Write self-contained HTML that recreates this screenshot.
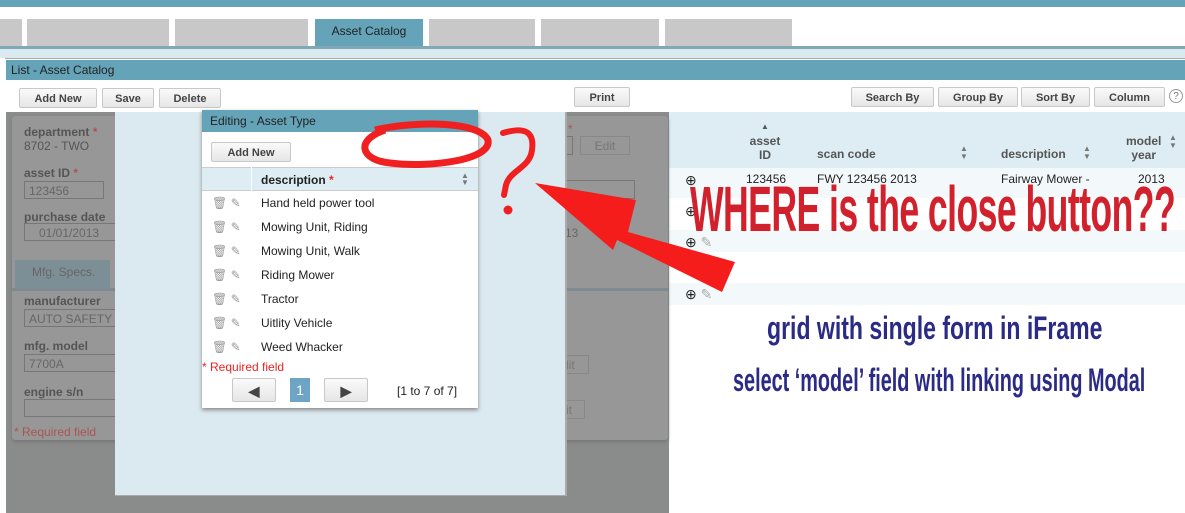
<!DOCTYPE html>
<html><head><style>
body{margin:0;width:1185px;height:513px;overflow:hidden;background:#fff;font-family:"Liberation Sans",sans-serif;position:relative}
.a{position:absolute}
.btn{position:absolute;height:20px;border:1px solid #c8c8c8;border-radius:2px;background:linear-gradient(#fafafa,#e6e6e6);font-size:11px;font-weight:bold;color:#444;text-align:center;line-height:20px;box-sizing:border-box}
.tab{position:absolute;top:19px;height:27px;background:#c8c8c8}
.lbl{position:absolute;font-size:12px;font-weight:bold;color:#555}
.inp{position:absolute;border:1px solid #777;height:18px;font-size:12px;color:#666;line-height:18px;padding-left:4px;box-sizing:border-box}
.row{position:absolute;left:0;width:276px;height:24px;font-size:12px;color:#222}
.row span{position:absolute;left:59px;top:5px}
.big{font-weight:bold;white-space:nowrap;transform-origin:0 0}
</style></head><body>
<div class="a" style="left:0;top:0;width:1185px;height:7px;background:#64a3b8"></div>
<div class="tab" style="left:0;width:22px"></div>
<div class="tab" style="left:27px;width:142px"></div>
<div class="tab" style="left:175px;width:133px"></div>
<div class="tab" style="left:315px;width:108px;background:#64a3b8;font-size:12px;text-align:center;line-height:25px;color:#222">Asset Catalog</div>
<div class="tab" style="left:429px;width:106px"></div>
<div class="tab" style="left:541px;width:118px"></div>
<div class="tab" style="left:665px;width:127px"></div>
<div class="a" style="left:0;top:46px;width:1185px;height:3px;background:#7fa9b8"></div>
<div class="a" style="left:0;top:49px;width:1185px;height:9px;background:#dbe9f0"></div>
<div class="a" style="left:5px;top:58px;width:1180px;height:1px;background:#aaa"></div>
<div class="a" style="left:6px;top:60px;width:1179px;height:20px;background:#64a3b8;font-size:12px;line-height:20px;color:#222;padding-left:5px">List - Asset Catalog</div>
<div class="btn" style="left:19px;top:88px;width:78px">Add New</div>
<div class="btn" style="left:102px;top:88px;width:52px">Save</div>
<div class="btn" style="left:159px;top:88px;width:62px">Delete</div>
<div class="btn" style="left:574px;top:87px;width:56px">Print</div>
<div class="btn" style="left:851px;top:87px;width:83px">Search By</div>
<div class="btn" style="left:938px;top:87px;width:80px">Group By</div>
<div class="btn" style="left:1021px;top:87px;width:69px">Sort By</div>
<div class="btn" style="left:1094px;top:87px;width:71px">Column</div>
<div class="a" style="left:1169px;top:89px;width:14px;height:14px;border:1px solid #999;border-radius:50%;font-size:10px;text-align:center;line-height:14px;color:#777;box-sizing:border-box">?</div>
<!-- right grid -->
<div class="a" style="left:669px;top:112px;width:516px;height:56px;background:#ddedf3"></div>
<div class="a" style="left:669px;top:168px;width:516px;height:30px;background:#f3f9fb"></div>
<div class="a" style="left:669px;top:230px;width:516px;height:22px;background:#f3f9fb"></div>
<div class="a" style="left:669px;top:283px;width:516px;height:22px;background:#f3f9fb"></div>
<div class="a" style="left:745px;top:118px;font-size:12px;font-weight:bold;color:#555;text-align:center;width:40px;line-height:14px"><span style="font-size:8px">▲<br></span>asset<br>ID</div>
<div class="a" style="left:817px;top:147px;font-size:12px;font-weight:bold;color:#555">scan code</div>
<div class="a" style="left:1001px;top:147px;font-size:12px;font-weight:bold;color:#555">description</div>
<div class="a" style="left:1126px;top:134px;font-size:12px;font-weight:bold;color:#555;text-align:center;line-height:14px">model<br>year</div>
<div class="a" style="left:960px;top:145px;font-size:8px;color:#777;line-height:8px">▲<br>▼</div>
<div class="a" style="left:1083px;top:145px;font-size:8px;color:#777;line-height:8px">▲<br>▼</div>
<div class="a" style="left:1169px;top:134px;font-size:8px;color:#777;line-height:8px">▲<br>▼</div>
<div class="a" style="left:746px;top:172px;font-size:12px;color:#222">123456</div>
<div class="a" style="left:817px;top:172px;font-size:12px;color:#222">FWY 123456 2013</div>
<div class="a" style="left:1001px;top:172px;font-size:12px;color:#222">Fairway Mower -</div>
<div class="a" style="left:1138px;top:172px;font-size:12px;color:#222">2013</div>
<div class="a" style="left:685px;top:172px;font-size:14px;color:#222">⊕</div>
<div class="a" style="left:685px;top:203px;font-size:14px;color:#222">⊕</div>
<div class="a" style="left:685px;top:234px;font-size:14px;color:#222">⊕ <span style="color:#aaa">✎</span></div>
<div class="a" style="left:685px;top:286px;font-size:14px;color:#222">⊕ <span style="color:#aaa">✎</span></div>
<!-- overlay left -->
<div class="a" style="left:6px;top:112px;width:663px;height:401px;background:#8a8c8c"></div>
<div class="a" style="left:12px;top:116px;width:656px;height:324px;background:#979797;border-radius:3px;box-shadow:0 2px 3px #777"></div>
<div class="lbl" style="left:24px;top:125px">department <span style="color:#a55">*</span></div>
<div class="a" style="left:24px;top:139px;font-size:12px;color:#555">8702 - TWO</div>
<div class="lbl" style="left:24px;top:166px">asset ID <span style="color:#a55">*</span></div>
<div class="inp" style="left:24px;top:181px;width:80px">123456</div>
<div class="lbl" style="left:24px;top:210px">purchase date</div>
<div class="inp" style="left:24px;top:223px;width:92px;padding-left:14px">01/01/2013</div>
<div class="a" style="left:15px;top:260px;width:95px;height:28px;background:#7d8f96;font-size:12px;color:#666;line-height:24px;padding-left:17px;box-sizing:border-box">Mfg. Specs.</div>
<div class="a" style="left:12px;top:288px;width:656px;height:3px;background:#7d8a8f"></div>
<div class="lbl" style="left:24px;top:294px">manufacturer</div>
<div class="inp" style="left:24px;top:309px;width:92px">AUTO SAFETY</div>
<div class="lbl" style="left:24px;top:339px">mfg. model</div>
<div class="inp" style="left:24px;top:354px;width:92px">7700A</div>
<div class="lbl" style="left:24px;top:385px">engine s/n</div>
<div class="inp" style="left:24px;top:399px;width:92px"></div>
<div class="a" style="left:14px;top:425px;font-size:12px;color:#a55">* Required field</div>
<div class="a" style="left:568px;top:122px;font-size:12px;color:#a55">*</div>
<div class="a" style="left:565px;top:136px;width:8px;height:19px;border:1px solid #777;box-sizing:border-box"></div>
<div class="a" style="left:580px;top:136px;width:50px;height:19px;border:1px solid #888;font-size:12px;color:#777;text-align:center;line-height:18px;box-sizing:border-box">Edit</div>
<div class="a" style="left:565px;top:180px;width:70px;height:19px;border:1px solid #777;box-sizing:border-box"></div>
<div class="a" style="left:565px;top:226px;font-size:12px;color:#666">13</div>
<div class="a" style="left:565px;top:355px;width:24px;height:19px;border:1px solid #888;font-size:12px;color:#777;line-height:18px;box-sizing:border-box">lit</div>
<div class="a" style="left:565px;top:400px;width:20px;height:19px;border:1px solid #888;font-size:12px;color:#777;line-height:18px;box-sizing:border-box">it</div>
<!-- iframe modal -->
<div class="a" style="left:115px;top:112px;width:450px;height:383px;background:#dbe9f0;border-right:2px solid #aaa;border-bottom:1px solid #aaa"></div>
<div class="a" style="left:202px;top:110px;width:276px;height:298px;background:#fff;box-shadow:0 2px 4px #888">
 <div class="a" style="left:0;top:0;width:276px;height:22px;background:#64a3b8;font-size:12px;color:#222;line-height:22px;padding-left:8px;box-sizing:border-box">Editing - Asset Type</div>
 <div class="btn" style="left:9px;top:32px;width:80px">Add New</div>
 <div class="a" style="left:0;top:57px;width:276px;height:24px;background:#ddedf3;border-top:1px solid #ccc;border-bottom:1px solid #ccc;box-sizing:border-box"></div>
 <div class="a" style="left:49px;top:57px;width:1px;height:24px;background:#fff"></div>
 <div class="a" style="left:59px;top:63px;font-size:12px;font-weight:bold;color:#222">description <span style="color:#e22">*</span></div>
 <div class="a" style="left:259px;top:62px;font-size:8px;color:#777;line-height:7px">▲<br>▼</div>
 <div class="row" style="top:81px"><span style="left:10px;color:#999">🗑 ✎</span><span>Hand held power tool</span></div>
 <div class="row" style="top:105px"><span style="left:10px;color:#999">🗑 ✎</span><span>Mowing Unit, Riding</span></div>
 <div class="row" style="top:129px"><span style="left:10px;color:#999">🗑 ✎</span><span>Mowing Unit, Walk</span></div>
 <div class="row" style="top:153px"><span style="left:10px;color:#999">🗑 ✎</span><span>Riding Mower</span></div>
 <div class="row" style="top:177px"><span style="left:10px;color:#999">🗑 ✎</span><span>Tractor</span></div>
 <div class="row" style="top:201px"><span style="left:10px;color:#999">🗑 ✎</span><span>Uitlity Vehicle</span></div>
 <div class="row" style="top:225px"><span style="left:10px;color:#999">🗑 ✎</span><span>Weed Whacker</span></div>
 <div class="a" style="left:0;top:250px;font-size:12px;color:#e22">* Required field</div>
 <div class="btn" style="left:30px;top:268px;width:44px;height:24px;line-height:24px;font-size:14px">◀</div>
 <div class="a" style="left:88px;top:268px;width:20px;height:24px;background:#6fa5c4;color:#fff;font-size:14px;text-align:center;line-height:24px">1</div>
 <div class="btn" style="left:122px;top:268px;width:44px;height:24px;line-height:24px;font-size:14px">▶</div>
 <div class="a" style="left:195px;top:274px;font-size:12px;color:#222">[1 to 7 of 7]</div>
</div>
<!-- annotations -->
<svg class="a" style="left:0;top:0" width="1185" height="513">
 <path d="M375 130 C420 120 480 122 488 140 C492 160 430 168 390 163 C360 160 355 140 385 130" fill="none" stroke="#f02020" stroke-width="7"/>
 <path d="M503 133 C520 128 535 128 532 150 C530 168 510 170 506 185 L504 195" fill="none" stroke="#f02020" stroke-width="6" stroke-linecap="round"/>
 <circle cx="508" cy="210" r="4.5" fill="#f02020"/>
 <polygon points="535,183 636,200 628,232 735,262 722,292 617,240 613,250" fill="#f51c1c"/>
</svg>
<div class="a big" style="left:690px;top:172px;font-size:64px;color:#d0212c;transform:scaleX(0.556);letter-spacing:-1px">WHERE is the close button??</div>
<div class="a big" style="left:767px;top:310px;font-size:32px;color:#2b2b86;transform:scaleX(0.72)">grid with single form in iFrame</div>
<div class="a big" style="left:733px;top:362px;font-size:32px;color:#2b2b86;transform:scaleX(0.62)">select ‘model’ field with linking using Modal</div>
</body></html>
